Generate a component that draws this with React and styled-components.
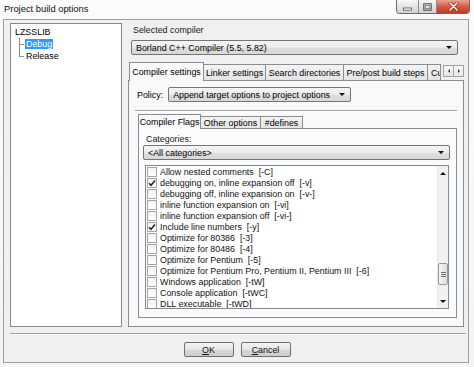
import React from "react";
import styled, { createGlobalStyle } from "styled-components";

const GlobalStyle = createGlobalStyle`
  html, body { margin: 0; padding: 0; }
  body {
    background: #ffffff;
    font-family: "Liberation Sans", Arial, sans-serif;
    font-size: 8.9px;
    color: #000;
  }
  * { box-sizing: border-box; }
`;

const Window = styled.div`
  width: 474px;
  height: 367px;
  display: flex;
  flex-direction: column;
  background: linear-gradient(#fbfbfb, #f4f4f4);
  overflow: hidden;
`;

const TitleBar = styled.div`
  height: 19px;
  flex: none;
  display: flex;
  justify-content: space-between;
  align-items: flex-start;
  padding: 0 4px 0 4px;
`;

const Title = styled.div`
  font-size: 9.4px;
  line-height: 18px;
  color: #111;
`;

const Controls = styled.div`
  display: flex;
  height: 14px;
  border: 1px solid #6a6a6a;
  border-top: none;
  border-radius: 0 0 4px 4px;
  overflow: hidden;
`;

const CtrlButton = styled.div`
  width: ${(p) => p.$w}px;
  height: 13px;
  display: flex;
  align-items: center;
  justify-content: center;
  border-left: ${(p) => (p.$first ? "none" : "1px solid #8a8a8a")};
  background: ${(p) =>
    p.$close
      ? "linear-gradient(#eaa596, #d65a40 50%, #c13a1f)"
      : "linear-gradient(#f8f8f8, #e4e4e4 50%, #d2d2d2)"};
`;

const Frame = styled.div`
  flex: 1;
  margin: 0 5px 4px 3px;
  border: 1px solid #9e9e9e;
  background: #f0f0f0;
  padding: 3px 4px 5px 6px;
  display: flex;
  flex-direction: column;
`;

const Main = styled.div`
  height: 304px;
  flex: none;
  display: flex;
  gap: 6px;
`;

const TreeBox = styled.div`
  width: 112px;
  flex: none;
  border: 1px solid #828790;
  background: #fff;
  padding: 3px 4px;
`;

const TreeRoot = styled.div`
  height: 11px;
  line-height: 11px;
`;

const TreeChildren = styled.div`
  margin-left: 4px;
`;

const TreeChild = styled.div`
  position: relative;
  height: 12px;
  padding-left: 6px;
  display: flex;
  align-items: center;

  &::before {
    content: "";
    position: absolute;
    left: 0;
    top: 0;
    height: ${(p) => (p.$last ? "7px" : "12px")};
    border-left: 1px solid #8c8c8c;
  }
  &::after {
    content: "";
    position: absolute;
    left: 1px;
    top: 6px;
    width: 4px;
    border-top: 1px solid #8c8c8c;
  }
`;

const TreeLabel = styled.span`
  line-height: 10px;
  padding: 0 1px;
  background: ${(p) => (p.$selected ? "#3399ff" : "transparent")};
  color: ${(p) => (p.$selected ? "#fff" : "#000")};
`;

const RightCol = styled.div`
  flex: 1;
  display: flex;
  flex-direction: column;
  min-width: 0;
`;

const FieldLabel = styled.div`
  height: ${(p) => p.$h || 14}px;
  line-height: ${(p) => p.$h || 14}px;
  padding-left: ${(p) => p.$pl || 0}px;
  color: #1a1a1a;
`;

const Select = styled.div`
  height: 15px;
  flex: none;
  width: ${(p) => (p.$w ? `${p.$w}px` : "auto")};
  margin: ${(p) => p.$m || "0"};
  border: 1px solid #747474;
  border-radius: 2px;
  background: linear-gradient(#f5f5f5, #ebebeb 50%, #dedede 51%, #d8d8d8);
  display: flex;
  align-items: center;
  justify-content: space-between;
  padding: 0 5px 0 4px;
  white-space: nowrap;
`;

const DropArrow = styled.span`
  width: 0;
  height: 0;
  border-left: 3px solid transparent;
  border-right: 3px solid transparent;
  border-top: 3px solid #111;
`;

const UpArrow = styled.span`
  width: 0;
  height: 0;
  border-left: 3px solid transparent;
  border-right: 3px solid transparent;
  border-bottom: 3px solid #111;
`;

const TabStrip = styled.div`
  display: flex;
  align-items: flex-end;
  height: ${(p) => p.$h}px;
  margin: ${(p) => p.$m};
  position: relative;
  z-index: 1;
`;

const TabScroller = styled.div`
  flex: 1;
  display: flex;
  align-items: flex-end;
  overflow: hidden;
  height: 100%;
  padding-left: 1px;
`;

const Tab = styled.div`
  flex: none;
  width: ${(p) => p.$w}px;
  height: ${(p) => (p.$active ? "100%" : "calc(100% - 2px)")};
  margin-left: ${(p) => (p.$first ? 0 : -1)}px;
  border: 1px solid #898c95;
  border-bottom: ${(p) => (p.$active ? "none" : "1px solid #898c95")};
  background: ${(p) =>
    p.$active ? "#f9f9f9" : "linear-gradient(#f4f4f4, #e4e4e4)"};
  position: relative;
  z-index: ${(p) => (p.$active ? 2 : 1)};
  display: flex;
  align-items: center;
  justify-content: ${(p) => (p.$clip ? "flex-start" : "center")};
  padding-left: ${(p) => (p.$clip ? 3 : 0)}px;
  padding-bottom: ${(p) => (p.$active ? 1 : 0)}px;
  white-space: nowrap;
  overflow: hidden;
`;

const TabArrows = styled.div`
  display: flex;
  margin-bottom: 4px;
  flex: none;
`;

const ArrowBtn = styled.div`
  width: 11px;
  height: 12px;
  border: 1px solid #a3a3a3;
  margin-left: ${(p) => (p.$first ? 0 : -1)}px;
  background: linear-gradient(#f8f8f8, #e6e6e6);
  display: flex;
  align-items: center;
  justify-content: center;
`;

const SmallTri = styled.span`
  width: 0;
  height: 0;
  border-top: 2px solid transparent;
  border-bottom: 2px solid transparent;
  ${(p) => (p.$dir === "left" ? "border-right: 2px solid #333;" : "border-left: 2px solid #333;")}
`;

const TabPanel = styled.div`
  flex: 1;
  border: 1px solid #898c95;
  background: #f9f9f9;
  padding: 6px 6px 8px 8px;
  display: flex;
  flex-direction: column;
`;

const PolicyRow = styled.div`
  display: flex;
  align-items: center;
  height: 15px;
  gap: 5px;
`;

const Separator = styled.div`
  flex: none;
  border-top: 1px solid #a0a0a0;
  border-bottom: 1px solid #ffffff;
  margin: ${(p) => p.$m};
`;

const InnerPanel = styled.div`
  flex: 1;
  margin-left: 1px;
  border: 1px solid #898c95;
  background: #fbfbfb;
  padding: 4px 6px 6px 7px;
  display: flex;
  flex-direction: column;
`;

const ListBox = styled.div`
  height: 144px;
  flex: none;
  margin: 5px 1px 0 -1px;
  border: 1px solid #828790;
  background: #fff;
  display: flex;
  overflow: hidden;
`;

const Rows = styled.div`
  flex: 1;
  padding-left: 1px;
  overflow: hidden;
`;

const Row = styled.div`
  height: 11px;
  display: flex;
  align-items: center;
  white-space: pre;
  color: #111;
`;

const CheckBox = styled.span`
  width: 10px;
  height: 10px;
  flex: none;
  margin-right: 3px;
  border: 1px solid #a4a4a4;
  background: linear-gradient(#f2f2f2, #ffffff);
  display: flex;
  align-items: center;
  justify-content: center;
`;

const ScrollBar = styled.div`
  width: 11px;
  flex: none;
  display: flex;
  flex-direction: column;
  background: #f1f1f1;
  border-left: 1px solid #e8e8e8;
`;

const ScrollArrow = styled.div`
  height: 14px;
  flex: none;
  display: flex;
  align-items: center;
  justify-content: center;
`;

const ScrollTrack = styled.div`
  flex: 1;
`;

const Thumb = styled.div`
  margin: 83px 0 0 0;
  height: 22px;
  border: 1px solid #979797;
  border-radius: 2px;
  background: linear-gradient(90deg, #f6f6f6, #dcdcdc);
  display: flex;
  flex-direction: column;
  align-items: center;
  justify-content: center;
  gap: 1px;
`;

const Grip = styled.span`
  width: 5px;
  height: 1px;
  background: #6f6f6f;
`;

const ButtonRow = styled.div`
  margin-top: 7px;
  display: flex;
  justify-content: center;
  gap: 7px;
`;

const Button = styled.div`
  width: 50px;
  height: 15px;
  border: 1px solid #707070;
  border-radius: 2px;
  background: linear-gradient(#f3f3f3, #e6e6e6 50%, #d8d8d8 51%, #cdcdcd);
  display: flex;
  align-items: center;
  justify-content: center;
  color: #111;
`;

const Check = () => (
  <svg width="8" height="8" viewBox="0 0 8 8">
    <path d="M1 4.2 L3 6.3 L7 1.5" fill="none" stroke="#222" strokeWidth="1.5" />
  </svg>
);

const flags = [
  ["Allow nested comments  [-C]", false],
  ["debugging on, inline expansion off  [-v]", true],
  ["debugging off, inline expansion on  [-v-]", false],
  ["inline function expansion on  [-vi]", false],
  ["inline function expansion off  [-vi-]", false],
  ["Include line numbers  [-y]", true],
  ["Optimize for 80386  [-3]", false],
  ["Optimize for 80486  [-4]", false],
  ["Optimize for Pentium  [-5]", false],
  ["Optimize for Pentium Pro, Pentium II, Pentium III  [-6]", false],
  ["Windows application  [-tW]", false],
  ["Console application  [-tWC]", false],
  ["DLL executable  [-tWD]", false],
];

export default function App() {
  return (
    <>
      <GlobalStyle />
      <Window>
        <TitleBar>
          <Title>Project build options</Title>
          <Controls>
            <CtrlButton $w={21} $first>
              <svg width="9" height="8" viewBox="0 0 9 8">
                <rect x="0.5" y="5" width="8" height="2.2" fill="#fff" stroke="#555" strokeWidth="0.8" />
              </svg>
            </CtrlButton>
            <CtrlButton $w={18}>
              <svg width="9" height="8" viewBox="0 0 9 8">
                <rect x="0.8" y="0.8" width="7.4" height="6.4" fill="none" stroke="#444" strokeWidth="1" />
                <rect x="2.3" y="2.6" width="4.4" height="3" fill="none" stroke="#777" strokeWidth="0.8" />
              </svg>
            </CtrlButton>
            <CtrlButton $w={33} $close>
              <svg width="11" height="9" viewBox="0 0 11 9">
                <path d="M2 1 L9 8 M9 1 L2 8" stroke="#7a2a1a" strokeWidth="3" strokeLinecap="round" />
                <path d="M2 1 L9 8 M9 1 L2 8" stroke="#fff" strokeWidth="1.6" strokeLinecap="round" />
              </svg>
            </CtrlButton>
          </Controls>
        </TitleBar>
        <Frame>
          <Main>
            <TreeBox>
              <TreeRoot>LZSSLIB</TreeRoot>
              <TreeChildren>
                <TreeChild>
                  <TreeLabel $selected>Debug</TreeLabel>
                </TreeChild>
                <TreeChild $last>
                  <TreeLabel>Release</TreeLabel>
                </TreeChild>
              </TreeChildren>
            </TreeBox>
            <RightCol>
              <FieldLabel $pl={5}>Selected compiler</FieldLabel>
              <Select $m="3px 6px 0 3px">
                <span>Borland C++ Compiler (5.5, 5.82)</span>
                <DropArrow />
              </Select>
              <TabStrip $h={19} $m="7px 0 -1px 0">
                <TabScroller>
                  <Tab $w={75} $first $active>Compiler settings</Tab>
                  <Tab $w={63}>Linker settings</Tab>
                  <Tab $w={79}>Search directories</Tab>
                  <Tab $w={85}>Pre/post build steps</Tab>
                  <Tab $w={14} $clip>Cu</Tab>
                </TabScroller>
                <TabArrows>
                  <ArrowBtn $first>
                    <SmallTri $dir="left" />
                  </ArrowBtn>
                  <ArrowBtn>
                    <SmallTri $dir="right" />
                  </ArrowBtn>
                </TabArrows>
              </TabStrip>
              <TabPanel>
                <PolicyRow>
                  <span>Policy:</span>
                  <Select $w={183}>
                    <span>Append target options to project options</span>
                    <DropArrow />
                  </Select>
                </PolicyRow>
                <Separator $m="8px 0 0 -2px" />
                <TabStrip $h={15} $m="2px 0 -1px 0">
                  <TabScroller>
                    <Tab $w={63} $first $active>Compiler Flags</Tab>
                    <Tab $w={61}>Other options</Tab>
                    <Tab $w={43}>#defines</Tab>
                  </TabScroller>
                </TabStrip>
                <InnerPanel>
                  <FieldLabel $h={12}>Categories:</FieldLabel>
                  <Select $m="0 0 0 -3px">
                    <span>&lt;All categories&gt;</span>
                    <DropArrow />
                  </Select>
                  <ListBox>
                    <Rows>
                      {flags.map(([label, on]) => (
                        <Row key={label}>
                          <CheckBox>{on && <Check />}</CheckBox>
                          {label}
                        </Row>
                      ))}
                    </Rows>
                    <ScrollBar>
                      <ScrollArrow>
                        <UpArrow />
                      </ScrollArrow>
                      <ScrollTrack>
                        <Thumb>
                          <Grip />
                          <Grip />
                          <Grip />
                        </Thumb>
                      </ScrollTrack>
                      <ScrollArrow>
                        <DropArrow />
                      </ScrollArrow>
                    </ScrollBar>
                  </ListBox>
                </InnerPanel>
              </TabPanel>
            </RightCol>
          </Main>
          <Separator $m="6px -2px 0 0" />
          <ButtonRow>
            <Button>
              <u>O</u>K
            </Button>
            <Button>
              <u>C</u>ancel
            </Button>
          </ButtonRow>
        </Frame>
      </Window>
    </>
  );
}
